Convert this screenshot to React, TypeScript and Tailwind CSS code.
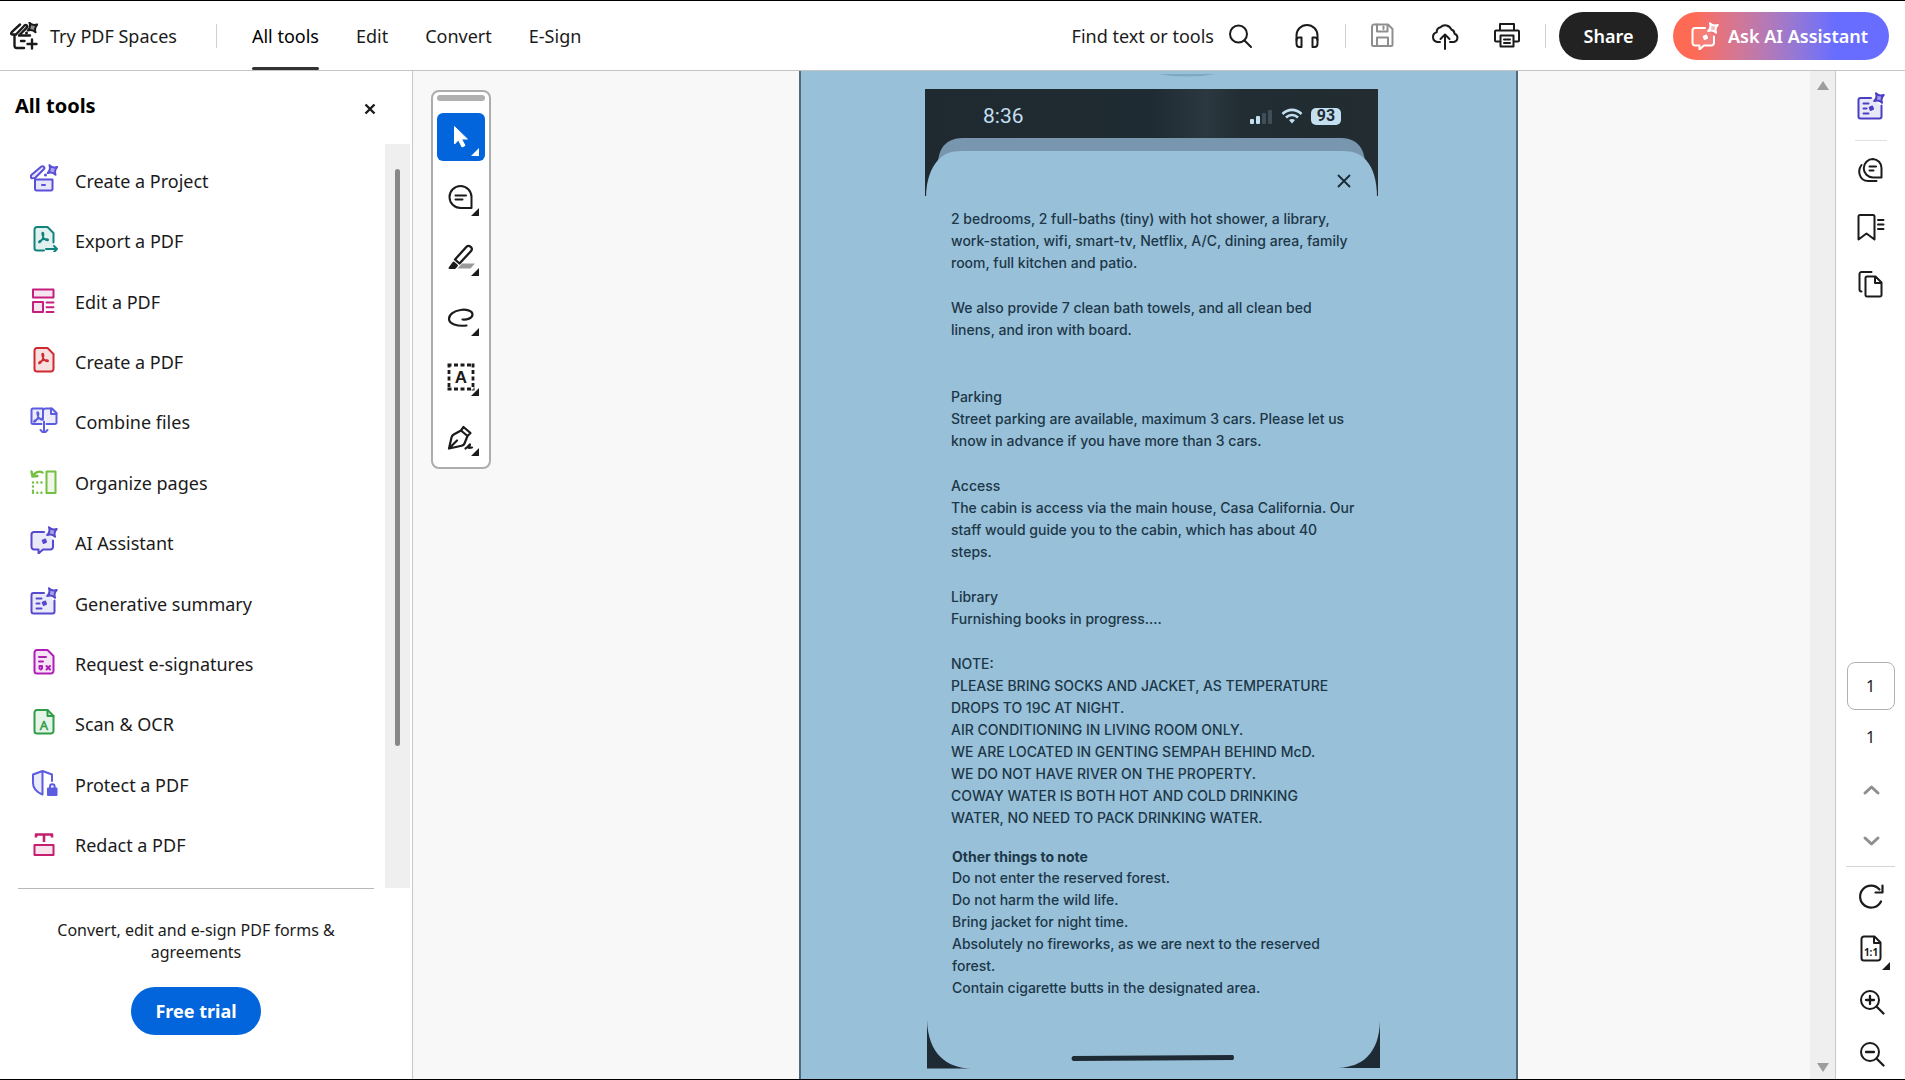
import React from "react"
import { clsx } from "clsx"

type IconProps = { className?: string }

function Icon({ children, className }: { children: React.ReactNode; className?: string }) {
  return (
    <svg
      viewBox="0 0 28 28"
      fill="none"
      stroke="currentColor"
      strokeWidth="2"
      strokeLinecap="round"
      strokeLinejoin="round"
      aria-hidden="true"
      className={clsx("size-7 shrink-0", className)}
    >
      {children}
    </svg>
  )
}

// Four pointed star used by all the AI icons
function Sparkle({ x, y }: { x: number; y: number }) {
  return (
    <path
      transform={`translate(${x} ${y}) rotate(12)`}
      strokeWidth="2"
      fill="currentColor"
      fillOpacity="0.5"
      d="M-4 -4Q0 -1.4 4 -4Q1.4 0 4 4Q0 1.4 -4 4Q-1.4 0 -4 -4Z"
    />
  )
}

function AcrobatMark({ x = 0, y = 0 }: { x?: number; y?: number }) {
  return (
    <path
      transform={`translate(${x} ${y})`}
      strokeWidth="1.5"
      d="M12.6 8.5c1.4 0 1.2 2.6.4 4.8-.8 2.3-2.2 4.7-3.4 5.2-1.1.3-1.1-.9.3-1.8 1.8-1.2 5.1-2 7.2-1.7 1.7.3 1.4 1.6.1 1.5-2-.3-4.5-3.3-5-6-.2-1.1-.1-2 .4-2z"
    />
  )
}

const DOC = "M7 3h10.5l6 6v15a2.5 2.5 0 0 1-2.5 2.5H7A2.5 2.5 0 0 1 4.5 24V5.5A2.5 2.5 0 0 1 7 3z"

const SpacesIcon = ({ className }: IconProps) => (
  <Icon className={className}>
    <path
      strokeWidth="2.4"
      d="M6 12.5 14.5 3.5c1.500-1.300 3.500.5 2.300 2.200L9 13.500M6 12.500H2c-1.300-.5-.8-2 0-2.700L10 2.500M4.500 14v9.500c0 1.500.7 2.500 2.200 2.500H14M9 13.500h11M11 19h3.500M22 17.500v9M17.500 22h9"
    />
    <path strokeWidth="3" d="M16.5 11h.01" />
    <Sparkle x={22.5} y={5.5} />
  </Icon>
)

const ProjectIcon = () => (
  <Icon>
    <path fill="currentColor" fillOpacity="0.15" d="M5 15.5h17.5V25a1.5 1.5 0 0 1-1.5 1.5H6.5A1.5 1.5 0 0 1 5 25z" />
    <path fill="currentColor" fillOpacity="0.15" d="m1.600 10.800 9.800-8.200c2-1.300 4 1 2.400 2.700L5 14 1.300 14.200C.8 13 .8 11.500 1.600 10.800z" />
    <path d="M12 21h3" />
    <path strokeWidth="3" d="M15.5 11h.01" />
    <Sparkle x={22.5} y={6} />
  </Icon>
)

const ExportIcon = () => (
  <Icon>
    <path fill="currentColor" fillOpacity="0.12" stroke="none" d={DOC} />
    <path d="M14 26.5H7A2.5 2.5 0 0 1 4.5 24V5.5A2.5 2.5 0 0 1 7 3h10.5l6 6v9.5M16 25h11M24 22l3 3-3 3" />
    <AcrobatMark />
  </Icon>
)

const EditIcon = () => (
  <Icon>
    <path fill="currentColor" fillOpacity="0.12" d="M3 4.5h20.5v8H3zM3 17h10v10H3z" />
    <path d="M16.5 17.5h7M16.5 22.2h7M16.5 27h7" />
  </Icon>
)

const CreateIcon = () => (
  <Icon>
    <path fill="currentColor" fillOpacity="0.15" d={DOC} />
    <AcrobatMark />
  </Icon>
)

const CombineIcon = () => (
  <Icon>
    <path
      fill="currentColor"
      fillOpacity="0.12"
      d="M11.5 19H3a1.5 1.5 0 0 1-1.5-1.5V5A1.5 1.5 0 0 1 3 3.5h10V14M13 5.5c.5-1.3 1-2 2.5-2h6.5l4.5 4.5v9.5A1.5 1.5 0 0 1 25 19h-8.5"
    />
    <path d="M21 3.5V9h5.5M14 16.5V28M10.5 25l3.5 3.5 3.5-3.5" />
    <AcrobatMark x={-5} y={-1.5} />
  </Icon>
)

const OrganizeIcon = () => (
  <Icon>
    <path fill="currentColor" fillOpacity="0.12" d="M16.5 5.5h9v21.5h-9z" />
    <path strokeWidth="2.4" d="M2.5 10.5C5 6 9 4.5 12.5 6.5M1.5 5.5l1 5 5-.5" />
    <path strokeWidth="2.4" strokeDasharray="0.1 4.1" d="M3 16.5h10M3 20.5V27M3 26.8h10" />
  </Icon>
)

const AssistantIcon = ({ className }: IconProps) => (
  <Icon className={className}>
    <path fill="currentColor" fillOpacity="0.12" stroke="none" d="M2 6h14l7 7v11H13l-4 4v-4H2z" />
    <path d="M14 6H4a2.5 2.5 0 0 0-2.5 2.5v12.5A2.5 2.5 0 0 0 4 23.5h4.5v4l4.5-4h7.5A2.5 2.5 0 0 0 23 21v-6.5" />
    <path strokeWidth="1.5" fill="currentColor" d="m12.5 14.5 2.8-1.2 1 2.8-2.8 1.2z" />
    <Sparkle x={22} y={6} />
  </Icon>
)

const SummaryIcon = ({ className }: IconProps) => (
  <Icon className={className}>
    <path fill="currentColor" fillOpacity="0.12" stroke="none" d="M2 6h14l8 8v12H2z" />
    <path d="M14 6H3.5A2 2 0 0 0 1.5 8v16.5a2 2 0 0 0 2 2H22.5a2 2 0 0 0 2-2v-11M6.5 11.5h5M6.5 16.5h3M6.5 21.5h5" />
    <path strokeWidth="1.5" fill="currentColor" d="m12.5 15.5 2.8-1.2 1 2.8-2.8 1.2z" />
    <Sparkle x={22} y={6} />
  </Icon>
)

const SignRequestIcon = () => (
  <Icon>
    <path fill="currentColor" fillOpacity="0.12" d={DOC} />
    <path d="M9 10h7M9 14.5h4M16.5 19l3.5 3.5M20 19l-3.5 3.5M9.5 19h2.5v2.5l-1.2 1-1.3-1z" />
  </Icon>
)

const OcrIcon = () => (
  <Icon>
    <path fill="currentColor" fillOpacity="0.12" d={DOC} />
    <path d="M17.5 3v6h6" />
    <text x="14" y="23" textAnchor="middle" fontSize="13" fill="currentColor" stroke="currentColor" strokeWidth="0.5" className="font-['Noto_Sans',sans-serif]">A</text>
  </Icon>
)

const ProtectIcon = () => (
  <Icon>
    <path fill="currentColor" fillOpacity="0.12" stroke="none" d="M12.5 3 3.5 6.5v9c0 5 4 9 9 11z" />
    <path d="M12.5 26.5c-5-2-9.500-6-9.500-11.500V6.500L12.500 3 22 6.500V13M12.500 3v23.500" />
    <path fill="currentColor" d="M18 20.5h8.5v6.500H18z" />
    <path d="M20 20v-1.500a2.300 2.300 0 0 1 4.600 0V20" />
  </Icon>
)

const RedactIcon = () => (
  <Icon>
    <path fill="currentColor" fillOpacity="0.12" d="M4.5 17h19V27h-19z" />
    <path strokeWidth="2.6" strokeLinecap="butt" d="M6 9.5v-3h16v3M14 6.5v7.5" />
  </Icon>
)

const tools = [
  { label: "Create a Project", icon: ProjectIcon, color: "text-[#5a50d8]" },
  { label: "Export a PDF", icon: ExportIcon, color: "text-[#12837c]" },
  { label: "Edit a PDF", icon: EditIcon, color: "text-[#c41f7f]" },
  { label: "Create a PDF", icon: CreateIcon, color: "text-[#cf2a30]" },
  { label: "Combine files", icon: CombineIcon, color: "text-[#5c5ce0]" },
  { label: "Organize pages", icon: OrganizeIcon, color: "text-[#74c043]" },
  { label: "AI Assistant", icon: AssistantIcon, color: "text-[#5549cc]" },
  { label: "Generative summary", icon: SummaryIcon, color: "text-[#5549cc]" },
  { label: "Request e-signatures", icon: SignRequestIcon, color: "text-[#b01fb5]" },
  { label: "Scan & OCR", icon: OcrIcon, color: "text-[#2f9c46]" },
  { label: "Protect a PDF", icon: ProtectIcon, color: "text-[#5c5ce0]" },
  { label: "Redact a PDF", icon: RedactIcon, color: "text-[#c41f6f]" },
]

const tabs = ["All tools", "Edit", "Convert", "E-Sign"]

function IconButton({ label, className, children }: { label: string; className?: string; children: React.ReactNode }) {
  return (
    <button type="button" aria-label={label} className={clsx("relative flex shrink-0 items-center justify-center", className)}>
      {children}
    </button>
  )
}

// Small triangle in the corner of a button that opens a submenu
function Corner({ className }: IconProps) {
  return (
    <svg viewBox="0 0 8 8" aria-hidden="true" className={clsx("absolute size-2", className)}>
      <path d="M8 0v8H0z" fill="currentColor" />
    </svg>
  )
}

const Separator = () => <div className="h-6 w-px shrink-0 bg-[#d0d0d0]" />

function TopBar() {
  return (
    <header className="flex h-[70px] shrink-0 items-center border-b border-[#c4c4c4] bg-white pr-4 pl-2.5">
      <button type="button" className="flex items-center gap-3 pr-[39px]">
        <SpacesIcon />
        Try PDF Spaces
      </button>
      <Separator />
      <nav className="ml-[35px] flex gap-[37px] self-stretch">
        {tabs.map((tab, i) => (
          <a
            key={tab}
            href="#"
            className={clsx("relative flex items-center", i === 0 && "text-black")}
          >
            {tab}
            {i === 0 && <span className="absolute inset-x-0 bottom-0 h-[3px] rounded-full bg-[#323232]" />}
          </a>
        ))}
      </nav>

      <div className="ml-auto flex items-center">
        <button type="button" className="mr-[22px] flex items-center gap-3">
          Find text or tools
          <Icon>
            <circle cx="12.5" cy="12" r="8.5" />
            <path d="m18.5 18.5 6.5 6.5" />
          </Icon>
        </button>
        <IconButton label="Help" className="w-[62px]">
          <Icon>
            <path d="M3.500 18v-4.500a10.500 10.500 0 0 1 21 0V18" />
            <path d="M3.500 18.500c0-2 .8-3 2.500-3h2.500v9.500H6.500c-2 0-3-1.500-3-3.500zM24.500 18.500c0-2-.8-3-2.500-3h-2.500v9.500h2c2 0 3-1.500 3-3.500z" />
          </Icon>
        </IconButton>
        <div className="pr-1.5 pl-[7px]"><Separator /></div>
        <IconButton label="Save" className="w-[62px] text-[#8f8f8f]">
          <Icon>
            <path d="M5 2.500h14L23.500 7v15.500a1.500 1.500 0 0 1-1.500 1.500H4.500a1.500 1.500 0 0 1-1.500-1.500v-18A2 2 0 0 1 5 2.500z" />
            <path d="M8 2.500v7h10.500V3M14.500 4.500v2.500M8 24v-8.500h11V24" />
          </Icon>
        </IconButton>
        <IconButton label="Upload to cloud" className="w-[62px]">
          <Icon>
            <path d="M9 20H6.500a5 5 0 0 1-.8-9.800 5 5 0 0 1 3.800-4.900 6.500 6.500 0 0 1 10.800 2.200 4.500 4.500 0 0 1 3.200 4.200 4.300 4.300 0 0 1-.5 8.300H19" />
            <path d="M14 27V13M9.500 17l4.500-4.500 4.500 4.500" />
          </Icon>
        </IconButton>
        <IconButton label="Print" className="w-[62px]">
          <Icon>
            <path d="M7 8V2h14v6M6 19.500H3a1 1 0 0 1-1-1v-9a1 1 0 0 1 1-1h22a1 1 0 0 1 1 1v9a1 1 0 0 1-1 1h-3M7.500 13.500h13v11h-13zM11 17.500h6M11 21h6" />
          </Icon>
        </IconButton>
        <div className="pr-[13px] pl-[7px]"><Separator /></div>
        <button type="button" className="h-12 w-[99px] rounded-full bg-[#222222] font-semibold text-white">
          Share
        </button>
        <button
          type="button"
          className="ml-[15px] flex h-12 w-[216px] items-center gap-[9px] rounded-full bg-linear-to-r from-[#ff6a55] from-10% to-[#686dff] to-75% pl-[18px] font-semibold whitespace-nowrap text-white"
        >
          <AssistantIcon />
          Ask AI Assistant
        </button>
      </div>
    </header>
  )
}

function ToolsPanel() {
  return (
    <aside className="flex w-[413px] shrink-0 flex-col border-r border-[#c8c8c8] bg-white">
      <div className="flex h-[73px] shrink-0 items-center justify-between pr-8 pl-[15px]">
        <h2 className="pb-1 text-xl font-bold text-black">All tools</h2>
        <IconButton label="Close" className="size-5">
          <svg viewBox="0 0 20 20" className="size-5" stroke="currentColor" strokeWidth="2.4" aria-hidden="true">
            <path d="m5.5 6.5 9 9M14.5 6.5l-9 9" />
          </svg>
        </IconButton>
      </div>

      <div className="flex min-h-0 flex-1">
        <ul className="flex min-w-0 flex-1 flex-col justify-between overflow-hidden pt-[7px] pb-[13px]">
          {tools.map(({ label, icon: ToolIcon, color }) => (
            <li key={label}>
              <button type="button" className="flex h-[60px] w-full items-center gap-[17px] pl-[30px]">
                <span className={clsx("pb-1.5", color)}>
                  <ToolIcon />
                </span>
                {label}
              </button>
            </li>
          ))}
        </ul>
        <div className="mr-0.5 w-[25px] bg-[#efefef] pt-[25px]">
          <div className="ml-2.5 h-[577px] w-[5px] rounded-full bg-[#888888]" />
        </div>
      </div>

      <div className="ml-[18px] w-[356px] border-t border-[#b8b8b8] pt-[30px] pb-11 text-center">
        <p className="px-5 text-base leading-[22px]">Convert, edit and e-sign PDF forms &amp; agreements</p>
        <button type="button" className="mt-6 h-12 w-[130px] rounded-full bg-[#0265dc] font-bold text-white">
          Free trial
        </button>
      </div>
    </aside>
  )
}

function QuickTools() {
  return (
    <div className="mt-[19px] ml-[18px] flex w-[60px] shrink-0 flex-col items-center gap-3 self-start rounded-lg border-2 border-[#adadad] bg-white pt-[3px] pb-1.5">
      <div className="h-1.5 w-12 rounded-full bg-[#b0b0b0]" />
      <IconButton label="Select" className="size-12 rounded-md bg-[#0265dc] text-white">
        <Icon>
          <path fill="currentColor" strokeWidth="1" d="M7.5 4v17l4-4 3.5 7 3-1.5-3.5-6.5h5.5z" />
        </Icon>
        <Corner className="right-1.5 bottom-[5px]" />
      </IconButton>
      <IconButton label="Add comment" className="size-12">
        <Icon>
          <path d="M13.5 3a11 11 0 1 0 0 22H24.5V14a11 11 0 0 0-11-11zM8.5 12.5h10.5M8.500 16.500h7" />
        </Icon>
        <Corner className="right-1.5 bottom-[5px]" />
      </IconButton>
      <IconButton label="Highlight" className="size-12">
        <Icon>
          <path stroke="none" fill="#9a9a9a" d="m15 20.5h13l-4.5 5H10.5z" />
          <path strokeWidth="2.3" d="M8 16.5 19.5 3.8c1.5-1.5 3.2-.8 4.2 0s1.8 2.7.4 4.2L12.5 20.5zM8 16.5l4.5 4" />
          <path fill="currentColor" d="m6.5 19.5 3.5 3-2 2.5H2.5z" />
        </Icon>
        <Corner className="right-1.5 bottom-[5px]" />
      </IconButton>
      <IconButton label="Draw" className="size-12">
        <Icon>
          <path strokeWidth="2.2" d="M15.5 16.5c4 .5 10-1.2 10-5 0-4-7-5.5-12-4.5-6.5 1-11.5 4.5-11.5 9 0 5 8 7.5 17.5 6.5" />
        </Icon>
        <Corner className="right-1.5 bottom-[5px]" />
      </IconButton>
      <IconButton label="Add text" className="size-12">
        <Icon>
          <path strokeWidth="2.8" strokeLinecap="butt" strokeDasharray="4 2.5" d="M0.500 2h27M0.500 26h27M2 0.500v27M26 0.500v27" />
          <text x="14" y="20" textAnchor="middle" fontSize="17" fontWeight="700" fill="currentColor" stroke="none" className="font-['Liberation_Sans',sans-serif]">A</text>
        </Icon>
        <Corner className="right-1.5 bottom-[5px]" />
      </IconButton>
      <IconButton label="Sign" className="size-12">
        <Icon>
          <path
            strokeWidth="2.2"
            d="M2 25.5 4.500 14.500c.3-1.300 1-2.300 2.200-3L14 7.500l6.500 5.500-3 7.500c-.5 1.200-1.500 2-2.800 2.200zM2 25.500l8-8M14 7.500 16.500 4l7 6-3 3M18.500 25.500c2-1 3-3 4.500-4l-1 3.500 3-.5"
          />
        </Icon>
        <Corner className="right-1.5 bottom-[5px]" />
      </IconButton>
    </div>
  )
}

function PhoneHeader() {
  return (
    <div className="relative flex h-[109px] flex-col">
      <svg viewBox="0 0 453 109" preserveAspectRatio="none" aria-hidden="true" className="absolute inset-0 size-full">
        <defs>
          <linearGradient id="scan">
            <stop offset="0" stopColor="#1f2a30" />
            <stop offset="0.5" stopColor="#1f2b32" />
            <stop offset="0.62" stopColor="#2b383f" />
            <stop offset="0.7" stopColor="#212d33" />
            <stop offset="1" stopColor="#222c31" />
          </linearGradient>
        </defs>
        <path fill="url(#scan)" d="M0 0h453v107H0z" />
        <path fill="#7896ad" d="M13 72c2-16 10-22 24-23h380c13 1 21 7 23 23z" />
        <path fill="#98c0d9" d="M1 109c0-18 5-30 12-38 6-6 12-9 24-9h380c12 0 18 3 24 9 7 8 11 20 11 38z" />
      </svg>
      <div className="relative flex h-[54px] items-center justify-between pr-[37px] pl-[58px] text-[#c3dff0]">
        <span className="font-['Roboto',sans-serif] text-[21px]">8:36</span>
        <div className="flex items-center gap-2">
          <svg viewBox="0 0 24 16" aria-hidden="true" className="h-4 w-6" fill="currentColor">
            <rect x="1" y="11" width="4" height="5" rx="1" />
            <rect x="7" y="8" width="4" height="8" rx="1" />
            <rect x="13" y="5" width="4" height="11" rx="1" fill="#3f4e57" />
            <rect x="19" y="2" width="4" height="14" rx="1" fill="#3f4e57" />
          </svg>
          <svg viewBox="0 0 22 16" aria-hidden="true" className="h-4 w-[22px]" fill="none" stroke="currentColor" strokeWidth="2.6">
            <path d="M1.5 6C7 .5 15 .5 20.5 6M5 9.5c3.5-3.3 8.5-3.3 12 0" />
            <path d="m11 15.5-3-3.5q3-2 6 0z" fill="currentColor" stroke="none" />
          </svg>
          <span className="flex h-[17px] w-[30px] items-center justify-center rounded-[5px] bg-[#c3dff0] font-['Roboto',sans-serif] text-base font-bold text-[#1f2b32]">
            93
          </span>
        </div>
      </div>
      <div className="relative flex flex-1 items-center justify-end pt-[21px] pr-[27px]">
        <svg viewBox="0 0 14 14" aria-label="Close" className="size-3.5" stroke="#1a2a36" strokeWidth="1.8" strokeLinecap="round">
          <path d="m1.5 1.5 11 11M12.5 1.5l-11 11" />
        </svg>
      </div>
    </div>
  )
}

function Lines({ items, className }: { items: string[]; className?: string }) {
  return (
    <p className={className}>
      {items.map((item) => (
        <span key={item} className="block whitespace-nowrap">{item}</span>
      ))}
    </p>
  )
}

function DocumentPage() {
  return (
    <article className="relative min-h-full w-[719px] shrink-0 border-x-2 border-[#4f6a7c] bg-[#98c0d9] pt-[18px] pl-[124px]">
      <svg viewBox="0 0 58 4" aria-hidden="true" className="absolute top-0.5 left-[357px] h-1 w-[58px]">
        <path d="M0 1h58q-29 5-58 0z" fill="#7fa9c2" />
      </svg>
      <div className="w-[453px]">
        <PhoneHeader />
        <div className="flex flex-col gap-[23px] pt-2.5 pl-[26px] font-['Inter',sans-serif] text-sm leading-[22px] font-medium text-[#1c3747]">
          <Lines
            items={[
              "2 bedrooms, 2 full-baths (tiny) with hot shower, a library,",
              "work-station, wifi, smart-tv, Netflix, A/C, dining area, family",
              "room, full kitchen and patio.",
            ]}
          />
          <Lines
            className="pb-[22px]"
            items={["We also provide 7 clean bath towels, and all clean bed", "linens, and iron with board."]}
          />
          <Lines
            items={[
              "Parking",
              "Street parking are available, maximum 3 cars. Please let us",
              "know in advance if you have more than 3 cars.",
            ]}
          />
          <Lines
            items={[
              "Access",
              "The cabin is access via the main house, Casa California. Our",
              "staff would guide you to the cabin, which has about 40",
              "steps.",
            ]}
          />
          <Lines items={["Library", "Furnishing books in progress...."]} />
          <Lines
            items={[
              "NOTE:",
              "PLEASE BRING SOCKS AND JACKET, AS TEMPERATURE",
              "DROPS TO 19C AT NIGHT.",
              "AIR CONDITIONING IN LIVING ROOM ONLY.",
              "WE ARE LOCATED IN GENTING SEMPAH BEHIND McD.",
              "WE DO NOT HAVE RIVER ON THE PROPERTY.",
              "COWAY WATER IS BOTH HOT AND COLD DRINKING",
              "WATER, NO NEED TO PACK DRINKING WATER.",
            ]}
          />
        </div>
        <div className="pt-[18px] pl-[27px] font-['Inter',sans-serif] text-sm leading-[22px] font-medium text-[#1c3747]">
          <h3 className="leading-5 font-bold">Other things to note</h3>
          <Lines
            items={[
              "Do not enter the reserved forest.",
              "Do not harm the wild life.",
              "Bring jacket for night time.",
              "Absolutely no fireworks, as we are next to the reserved",
              "forest.",
              "Contain cigarette butts in the designated area.",
            ]}
          />
        </div>
        <svg viewBox="0 0 456 50" aria-hidden="true" className="mt-[21px] h-[50px] w-[456px]" fill="#1f2b34">
          <path d="M2 0v48.5h44C22 48 3 34 2 0zM455 1v47h-42c24-1 41-14 42-47z" />
          <path d="m148 36 160-1q2 2.5 0 5l-160 1q-3-2.500 0-5z" />
        </svg>
      </div>
    </article>
  )
}

function Viewer() {
  return (
    <main className="flex min-w-0 flex-1 overflow-hidden bg-[#f8f8f8]">
      <QuickTools />
      <div className="flex min-w-0 flex-1 justify-center pl-4">
        <DocumentPage />
      </div>
      <div className="flex w-[25px] shrink-0 flex-col items-center justify-between bg-[#efefef] pt-2.5 pb-[7px] text-[#9d9d9d]">
        <svg viewBox="0 0 12 9" aria-hidden="true" className="h-[9px] w-3">
          <path d="M6 0l6 9H0z" fill="currentColor" />
        </svg>
        <svg viewBox="0 0 12 9" aria-hidden="true" className="h-[9px] w-3">
          <path d="M6 9l6-9H0z" fill="currentColor" />
        </svg>
      </div>
    </main>
  )
}

function PageRail() {
  return (
    <aside className="flex w-[70px] shrink-0 flex-col items-center border-l border-[#c8c8c8] bg-white">
      <IconButton label="Generative summary" className="h-[69px] w-full text-[#4a3fc4]">
        <SummaryIcon />
      </IconButton>
      <div className="h-px w-8 bg-[#e0e0e0]" />
      <IconButton label="Comments" className="h-[57px] w-full">
        <Icon>
          <path d="M16 3a9 9 0 0 0 0 18.5h8.5V12A9 9 0 0 0 16 3zM12.5 10.5h6.5M12.5 14.5h4" />
          <path d="M4.500 9C.5 14 1.500 25.500 12 25h7.500" />
        </Icon>
      </IconButton>
      <IconButton label="Bookmarks" className="h-[57px] w-full">
        <Icon>
          <path d="M3 2h13A1.500 1.500 0 0 1 17.500 3.500V26.500l-8-6-8 6V3.500A1.500 1.500 0 0 1 3 2zM21 7h5.500M21 11.500h5.500M21 16h5.500" />
        </Icon>
      </IconButton>
      <IconButton label="Page thumbnails" className="h-[57px] w-full">
        <Icon>
          <path d="M10 6.500H18.500L24.500 12.500v12.500A1.500 1.500 0 0 1 23 26.500H10A1.500 1.500 0 0 1 8.500 25V8a1.500 1.500 0 0 1 1.500-1.500zM18 6.500v6.500h6.500" />
          <path d="M4.500 21.500c-1.500 0-2-1-2-2V4a2 2 0 0 1 2-2h10" />
        </Icon>
      </IconButton>

      <input
        type="text"
        defaultValue="1"
        aria-label="Page number"
        className="mt-auto size-12 shrink-0 rounded-lg border border-[#b1b1b1] text-center text-base"
      />
      <div className="flex h-[54px] items-center text-base">1</div>
      <IconButton label="Previous page" className="h-[51px] w-full text-[#8f8f8f]">
        <Icon>
          <path strokeWidth="3" d="m8 17 6.5-6 6.5 6" />
        </Icon>
      </IconButton>
      <IconButton label="Next page" className="h-[51px] w-full text-[#8f8f8f]">
        <Icon>
          <path strokeWidth="3" d="m8 11 6.5 6 6.5-6" />
        </Icon>
      </IconButton>
      <div className="mb-1 h-px w-[49px] bg-[#d5d5d5]" />
      <IconButton label="Rotate" className="h-[52px] w-full">
        <Icon>
          <path strokeWidth="2.2" d="M24 18.5A11 11 0 1 1 22.5 6.5M25.500 2.500v7h-7" />
        </Icon>
      </IconButton>
      <IconButton label="Page display" className="h-[52px] w-full">
        <Icon>
          <path d="M7 1.5h10.5l6 6V23A2.5 2.5 0 0 1 21 25.5H7A2.5 2.5 0 0 1 4.5 23V4A2.5 2.5 0 0 1 7 1.5zM17 1.5V8h6.5" />
          <text x="14" y="20.5" textAnchor="middle" fontSize="10" fontWeight="700" fill="currentColor" stroke="none" className="font-['Noto_Sans',sans-serif]">1:1</text>
        </Icon>
        <Corner className="right-[15px] bottom-[5px]" />
      </IconButton>
      <IconButton label="Zoom in" className="h-[52px] w-full">
        <Icon>
          <circle cx="13" cy="13" r="9" />
          <path strokeWidth="2.3" d="m19.5 19.5 7 7M9 13h8M13 9v8" />
        </Icon>
      </IconButton>
      <IconButton label="Zoom out" className="h-[52px] w-full">
        <Icon>
          <circle cx="13" cy="13" r="9" />
          <path strokeWidth="2.3" d="m19.5 19.5 7 7M9 13h8" />
        </Icon>
      </IconButton>
    </aside>
  )
}

export default function App() {
  return (
    <div className="flex h-screen flex-col overflow-hidden border-y border-black bg-white font-['Noto_Sans','Open_Sans',sans-serif] text-lg text-[#1b1b1b]">
      <TopBar />
      <div className="flex min-h-0 flex-1">
        <ToolsPanel />
        <Viewer />
        <PageRail />
      </div>
    </div>
  )
}
